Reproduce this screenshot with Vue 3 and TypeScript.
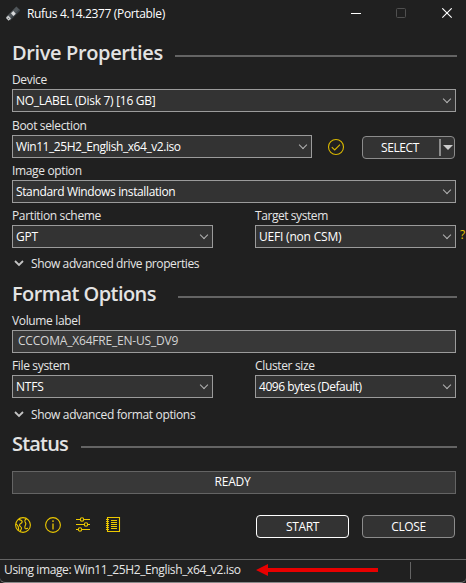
<script setup lang="ts">
import { ref } from 'vue'

const device = ref('NO_LABEL (Disk 7) [16 GB]')
const bootSelection = ref('Win11_25H2_English_x64_v2.iso')
const imageOption = ref('Standard Windows installation')
const partitionScheme = ref('GPT')
const targetSystem = ref('UEFI (non CSM)')
const volumeLabel = ref('CCCOMA_X64FRE_EN-US_DV9')
const fileSystem = ref('NTFS')
const clusterSize = ref('4096 bytes (Default)')
</script>

<template>
  <div class="window">
    <header class="titlebar">
      <svg class="app-icon" width="16" height="16" viewBox="0 0 16 16">
        <path d="M2.2 12.6 12.3 2.4" stroke="#50565a" stroke-width="5.4" />
        <path d="M5 12.6 13.6 4" stroke="#394047" stroke-width="1.4" />
        <path d="M1.2 13.3 3.6 11" stroke="#c9cbcc" stroke-width="4" />
        <path d="M6.2 8.6 8.6 6.4" stroke="#d9dadb" stroke-width="3.6" />
        <path d="m2 12 .9.9" stroke="#666" />
      </svg>
      <span class="title">Rufus 4.14.2377 (Portable)</span>
      <svg class="controls" width="102" height="12" viewBox="0 0 102 12" fill="none">
        <path d="M0 5.5h10" stroke="#fff" />
        <rect x="45.5" y=".5" width="9" height="9" rx="1" stroke="#505050" />
        <path d="m91.3.3 9.4 9.4m0-9.4-9.4 9.4" stroke="#fff" stroke-width="1.1" />
      </svg>
    </header>

    <main class="content">
      <h2 class="heading"><span class="h-drive">Drive Properties</span></h2>

      <div class="field first">
        <label>Device</label>
        <div class="combo"><span class="v-device">{{ device }}</span><i class="chevron"></i></div>
      </div>
      <div class="field second">
        <label>Boot selection</label>
        <div class="boot-row">
          <div class="combo"><span class="v-boot">{{ bootSelection }}</span><i class="chevron"></i></div>
          <svg class="check" width="18" height="18" viewBox="0 0 18 18" fill="none" stroke="#d9b800">
            <circle cx="9" cy="9" r="7.5" stroke-width="1.1" />
            <path d="m4.8 9.2 2.9 2.7 5.3-5.3" stroke-width="1.1" />
          </svg>
          <button class="btn select"><span class="caption">SELECT</span><span class="drop"></span></button>
        </div>
      </div>
      <div class="field">
        <label>Image option</label>
        <div class="combo"><span class="v-image">{{ imageOption }}</span><i class="chevron"></i></div>
      </div>
      <div class="pair">
        <div class="field">
          <label>Partition scheme</label>
          <div class="combo"><span>{{ partitionScheme }}</span><i class="chevron"></i></div>
        </div>
        <div class="field">
          <label class="l-target">Target system</label>
          <div class="combo"><span>{{ targetSystem }}</span><i class="chevron"></i></div>
          <span class="help">?</span>
        </div>
      </div>
      <div class="advanced">
        <svg width="10" height="7" viewBox="0 0 10 7"><path d="m1 1 4 4 4-4" fill="none" stroke="#c4c4c4" stroke-width="1.8" /></svg>
        <span class="a-drive">Show advanced drive properties</span>
      </div>

      <h2 class="heading format"><span class="h-format">Format Options</span></h2>

      <div class="field first">
        <label>Volume label</label>
        <div class="combo edit"><span>{{ volumeLabel }}</span></div>
      </div>
      <div class="pair">
        <div class="field">
          <label>File system</label>
          <div class="combo"><span>{{ fileSystem }}</span><i class="chevron"></i></div>
        </div>
        <div class="field">
          <label>Cluster size</label>
          <div class="combo"><span class="v-cluster">{{ clusterSize }}</span><i class="chevron"></i></div>
        </div>
      </div>
      <div class="advanced options">
        <svg width="10" height="7" viewBox="0 0 10 7"><path d="m1 1 4 4 4-4" fill="none" stroke="#c4c4c4" stroke-width="1.8" /></svg>
        <span class="a-format">Show advanced format options</span>
      </div>

      <h2 class="heading status"><span class="h-status">Status</span></h2>
      <div class="progress"><span>READY</span></div>

      <div class="actions">
        <div class="tools">
          <svg viewBox="0 0 18 18">
            <circle cx="9" cy="9" r="7.4" />
            <path d="M4.4 3.4c2 .4 3.8.8 3.8 2.3 0 1.8-2.8 1.7-2.7 3.4.1 1.5 2 1.5 2 3 0 1.2-.8 2-1.3 3.4M1.7 8c1.5.4 2 1.4 2.6 2.8l.5 3.5M12.4 2.5c-1.4 1.1-2 2.2-1.4 3.3.6 1 1.3 1.5.7 2.8-.7 1.5-1.5 2.5-.6 3.8.7.9 2 .1 2.8-.3" />
          </svg>
          <svg viewBox="0 0 18 18">
            <circle cx="9" cy="9" r="7.4" />
            <path d="M9 7.5v6M9 4.3v1.6" stroke-width="1.8" opacity=".72" />
          </svg>
          <svg viewBox="0 0 18 18">
            <path d="M2 3.5h4.2m3.6 0H16M2 8.5h8.2m3.6 0H16M2 13.5h2.2m3.6 0H16" stroke-width="1.2" />
            <circle cx="8" cy="3.5" r="1.7" /><circle cx="12" cy="8.5" r="1.7" /><circle cx="6" cy="13.5" r="1.7" />
          </svg>
          <svg viewBox="0 0 18 18">
            <path d="M3.5 1.5h12v14h-12zM7 4.5h6M7 6.5h6M7 8.5h6M7 10.5h6M7 12.5h6M2 3.5h3M2 5.5h3M2 7.5h3M2 9.5h3M2 11.5h3M2 13.5h3" />
          </svg>
        </div>
        <button class="btn start"><span class="caption">START</span></button>
        <button class="btn"><span class="caption">CLOSE</span></button>
      </div>
    </main>

    <footer class="statusbar">
      <span class="using">Using image: Win11_25H2_English_x64_v2.iso</span>
      <svg class="arrow" width="124" height="16" viewBox="0 0 124 16">
        <path d="M0 8 12 2v4h110v4H12v4z" fill="#e80000" />
      </svg>
      <i class="separator"></i>
    </footer>
  </div>
</template>

<style>
body { background: #202020; }
</style>

<style scoped>
* { box-sizing: border-box; }
.window { height: 583px; overflow: hidden; display: flex; flex-direction: column; background: #202020; color: #fff; font: 12px/16px "Open Sans", "Noto Sans", sans-serif; border-bottom: 1px solid #8a8a8a; border-radius: 0 0 5px 5px; }
span, label { white-space: nowrap; letter-spacing: -0.2px; }
.titlebar { height: 38px; flex: none; display: flex; align-items: flex-start; padding: 6px 13px 0 6px; }
.title { margin-left: 5px; letter-spacing: -0.35px; }
.controls { margin: 2px 0 0 auto; }
.content { height: 521px; flex: none; padding: 0 9px 0 12px; display: flex; flex-direction: column; }
.heading { display: flex; align-items: center; gap: 12px; height: 28px; margin: 0; font-size: 20px; line-height: 28px; font-weight: 600; color: #e3e3e3; }
.heading span { margin-top: 2px; }
.heading::after { content: ""; flex: 1; height: 2px; margin-top: 8px; background: #646464; }
.heading.format { gap: 22px; margin-top: 8px; }
.heading.status { gap: 13px; margin-top: 7px; }
.heading .h-drive { letter-spacing: -0.37px; }
.heading .h-format { letter-spacing: -0.55px; }
.heading .h-status { letter-spacing: -0.8px; }
.field { position: relative; display: flex; flex-direction: column; gap: 2px; width: 444px; margin-top: 4px; }
.field.first, .field.second { margin-top: 5px; }
label { height: 16px; line-height: 18px; color: #e6e6e6; letter-spacing: -0.35px; }
.l-target { letter-spacing: -0.43px; }
.combo { height: 23px; padding: 0 4px 0 3px; display: flex; align-items: center; justify-content: space-between; background: #333; border: 1px solid #9b9b9b; }
.combo .v-device { letter-spacing: -0.28px; }
.combo .v-boot { letter-spacing: -0.44px; }
.combo .v-image { letter-spacing: -0.37px; }
.combo .v-cluster { letter-spacing: -0.45px; }
.combo.edit { background: #383838; color: #d4d4d4; padding-left: 5px; }
.edit span { margin-top: -2px; }
.chevron { width: 6px; height: 6px; margin: -4px 1px 0 0; border: solid #b4b4b4; border-width: 0 1.3px 1.3px 0; transform: rotate(45deg); }
.boot-row { display: flex; height: 23px; }
.boot-row .combo { width: 300px; }
.check { margin: 3px 17px 0 15px; }
.pair { display: flex; gap: 42px; }
.pair .field { width: 201px; }
.help { position: absolute; left: 205px; top: 20px; color: #e0c000; }
.advanced { display: flex; align-items: center; gap: 7px; height: 16px; margin-top: 7px; padding-left: 2px; color: #e6e6e6; }
.advanced span { line-height: 18px; margin-top: 2px; }
.advanced .a-drive { letter-spacing: -0.39px; }
.advanced .a-format { letter-spacing: -0.35px; }
.advanced.options { margin-top: 8px; }
.progress { width: 444px; height: 23px; margin-top: 14px; display: flex; justify-content: center; padding: 2px 3px 0 0; background: #383838; border: 1px solid #646464; }
.btn { width: 93px; height: 23px; padding: 0; display: flex; align-items: center; justify-content: center; font: inherit; color: #fff; background: #333; border: 1px solid #8c8c8c; border-radius: 4px; }
.caption { letter-spacing: -0.4px; }
.select { margin-top: 1px; }
.select .caption { flex: 1; text-align: center; padding-right: 2px; }
.drop { width: 15px; height: 17px; border-left: 2px solid #8c8c8c; display: flex; align-items: center; justify-content: center; }
.drop::after { content: ""; border: solid transparent; border-width: 5px 5px 0; border-top-color: #ccc; }
.actions { display: flex; gap: 13px; margin-top: 21px; }
.tools { display: flex; gap: 12px; margin: 1px auto 0 2px; }
.tools svg { width: 18px; height: 18px; fill: none; stroke: #ecc800; stroke-width: 1.1; }
.actions .btn:last-child { margin-right: 2px; }
.start { border-color: #fff; }
.statusbar { height: 23px; flex: none; display: flex; align-items: flex-start; padding: 2px 55px 0 4px; border-top: 1px solid #646464; color: #e6e6e6; }
.using { width: 252px; letter-spacing: -0.37px; }
.separator { width: 1px; height: 17px; margin: 0 0 0 auto; background: #646464; }
</style>
